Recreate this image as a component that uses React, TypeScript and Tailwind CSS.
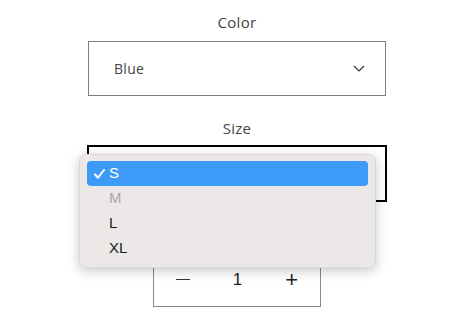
import { useState } from "react";

const sizes = [
  { label: "S", disabled: false },
  { label: "M", disabled: true },
  { label: "L", disabled: false },
  { label: "XL", disabled: false },
];

function Chevron() {
  return (
    <svg width="12" height="7" viewBox="0 0 12 7" fill="none">
      <path d="M1 1l5 5 5-5" stroke="#333" strokeWidth="1.1" />
    </svg>
  );
}

function Check() {
  return (
    <svg width="11" height="10" viewBox="0 0 11 10" fill="none">
      <path d="M1 5.5l3 3.2L10 1" stroke="#fff" strokeWidth="2" strokeLinecap="round" strokeLinejoin="round" />
    </svg>
  );
}

export default function App() {
  const [selected] = useState("S");
  const [qty] = useState(1);

  return (
    <div className="w-[474px] h-[326px] bg-white overflow-hidden font-['Open_Sans',sans-serif] text-[#454545]">
      <div className="flex flex-col items-center pt-[12px]">
        <p className="text-[15px] leading-[20px] tracking-[0.3px]">Color</p>
        <div className="mt-[9px] w-[298px] h-[55px] border border-[#7d7d7d] flex items-center justify-between pl-[25px] pr-[20px]">
          <span className="text-[14px] tracking-[0.3px]">Blue</span>
          <Chevron />
        </div>

        <p className="mt-[22px] text-[15px] leading-[20px] tracking-[0.3px]">Size</p>
        <div className="relative mt-[7px] w-[300px] h-[57px] border-2 border-black">
          <div className="absolute left-[-10px] top-[7px] z-10 w-[297px] rounded-[7px] bg-[#ece8e7] px-[7px] py-[6px] shadow-[0_3px_12px_rgba(0,0,0,0.22)] border border-[#dcd7d5] font-['Liberation_Sans',Arial,sans-serif]">
            {sizes.map((s) => {
              const active = s.label === selected;
              return (
                <div
                  key={s.label}
                  className={
                    "h-[25px] flex items-center rounded-[4px] text-[15px] " +
                    (active ? "bg-[#3d9af7] text-white" : s.disabled ? "text-[#a9a6a5]" : "text-[#1a1a1a]")
                  }
                >
                  <span className="w-[22px] flex justify-center pl-[2px]">{active && <Check />}</span>
                  <span>{s.label}</span>
                </div>
              );
            })}
          </div>
        </div>

        <div className="mt-[50px] w-[168px] h-[55px] border border-[#8a8a8a] flex items-center justify-between px-[22px] font-['Liberation_Sans',Arial,sans-serif] text-[#222] text-[18px]">
          <span className="w-[14px] h-[1.5px] bg-[#333]" />
          <span className="text-[17px]">{qty}</span>
          <span className="text-[22px] leading-none font-light">+</span>
        </div>
      </div>
    </div>
  );
}
